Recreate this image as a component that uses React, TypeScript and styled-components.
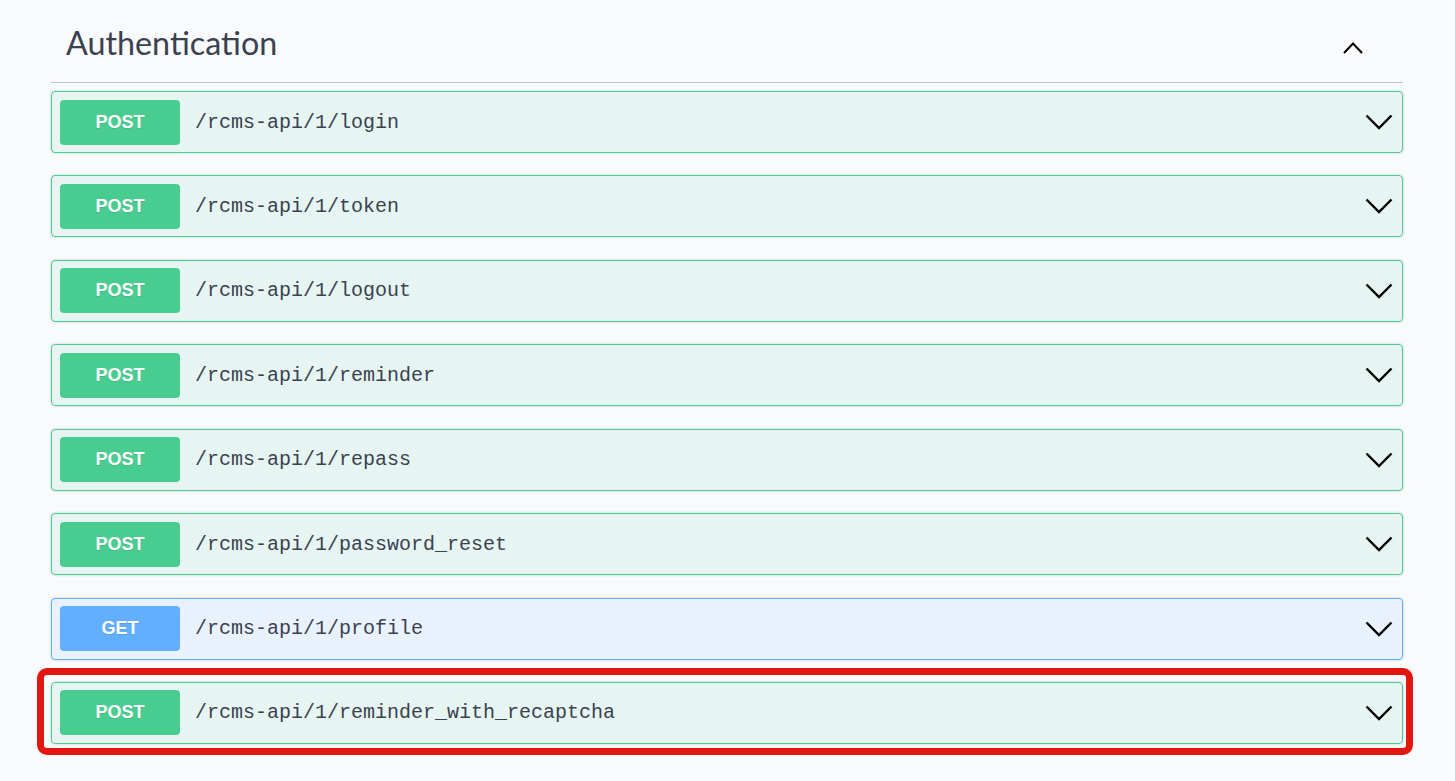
import React from 'react';
import styled, { createGlobalStyle } from 'styled-components';

type Method = 'POST' | 'GET';

const METHOD_COLORS: Record<Method, string> = {
  POST: '73, 204, 144',
  GET: '97, 175, 254',
};

const ENDPOINTS: { method: Method; path: string; highlight?: boolean }[] = [
  { method: 'POST', path: '/rcms-api/1/login' },
  { method: 'POST', path: '/rcms-api/1/token' },
  { method: 'POST', path: '/rcms-api/1/logout' },
  { method: 'POST', path: '/rcms-api/1/reminder' },
  { method: 'POST', path: '/rcms-api/1/repass' },
  { method: 'POST', path: '/rcms-api/1/password_reset' },
  { method: 'GET', path: '/rcms-api/1/profile' },
  { method: 'POST', path: '/rcms-api/1/reminder_with_recaptcha', highlight: true },
];

const GlobalStyle = createGlobalStyle`
  html, body {
    margin: 0;
    padding: 0;
    background: #f9fafc;
  }
  * { box-sizing: border-box; }
`;

const Page = styled.div`
  padding: 0 52px 26px 51px;
  font-family: 'Liberation Sans', Arial, sans-serif;
`;

const TagHeader = styled.div`
  display: flex;
  align-items: flex-start;
  justify-content: space-between;
  padding: 24px 40px 20px 15px;
  border-bottom: 1px solid rgba(59, 65, 81, 0.3);
`;

const TagTitle = styled.h3`
  margin: 0;
  font-family: Lato, 'Open Sans', sans-serif;
  font-size: 32.3px;
  line-height: 38px;
  font-weight: 400;
  color: #3b4151;
`;

const HeaderArrow = styled.svg`
  margin-top: 18px;
  display: block;
`;

const OpList = styled.div`
  display: flex;
  flex-direction: column;
  gap: 22.43px;
  margin-top: 8px;
`;

const Highlight = styled.div`
  margin: -14px -10px 0 -14px;
  padding: 7px 3px 4px 7px;
  border: 7px solid #e3170f;
  border-radius: 10px;
`;

const OpBlock = styled.div<{ $rgb: string }>`
  display: flex;
  align-items: center;
  height: 62px;
  padding: 0 9px 0 8px;
  border: 1px solid rgb(${p => p.$rgb});
  background: rgba(${p => p.$rgb}, 0.1);
  border-radius: 4px;
  box-shadow: 0 0 3px rgba(0, 0, 0, 0.19);
`;

const MethodBadge = styled.span<{ $rgb: string }>`
  display: flex;
  align-items: center;
  justify-content: center;
  width: 120px;
  height: 45px;
  flex: none;
  border-radius: 4px;
  background: rgb(${p => p.$rgb});
  color: #fff;
  font-family: 'Liberation Sans', Arial, sans-serif;
  font-size: 18px;
  font-weight: 700;
  text-shadow: 0 1px 0 rgba(0, 0, 0, 0.1);
`;

const PathText = styled.span`
  flex: 1;
  margin-left: 15px;
  font-family: 'Liberation Mono', 'DejaVu Sans Mono', monospace;
  font-size: 20px;
  color: #3b4151;
`;

const ChevronDown = () => (
  <svg width="28" height="16" viewBox="0 0 28 16" fill="none">
    <polyline points="1.5,1.5 14,14 26.5,1.5" stroke="#000" strokeWidth="2.4" />
  </svg>
);

function Operation({ method, path }: { method: Method; path: string }) {
  const rgb = METHOD_COLORS[method];
  return (
    <OpBlock $rgb={rgb}>
      <MethodBadge $rgb={rgb}>{method}</MethodBadge>
      <PathText>{path}</PathText>
      <ChevronDown />
    </OpBlock>
  );
}

export default function App() {
  return (
    <Page>
      <GlobalStyle />
      <TagHeader>
        <TagTitle>Authentication</TagTitle>
        <HeaderArrow width="20" height="12" viewBox="0 0 20 12" fill="none">
          <polyline points="1,11 10,1.5 19,11" stroke="#000" strokeWidth="2" />
        </HeaderArrow>
      </TagHeader>
      <OpList>
        {ENDPOINTS.map(ep =>
          ep.highlight ? (
            <Highlight key={ep.path}>
              <Operation method={ep.method} path={ep.path} />
            </Highlight>
          ) : (
            <Operation key={ep.path} method={ep.method} path={ep.path} />
          )
        )}
      </OpList>
    </Page>
  );
}
